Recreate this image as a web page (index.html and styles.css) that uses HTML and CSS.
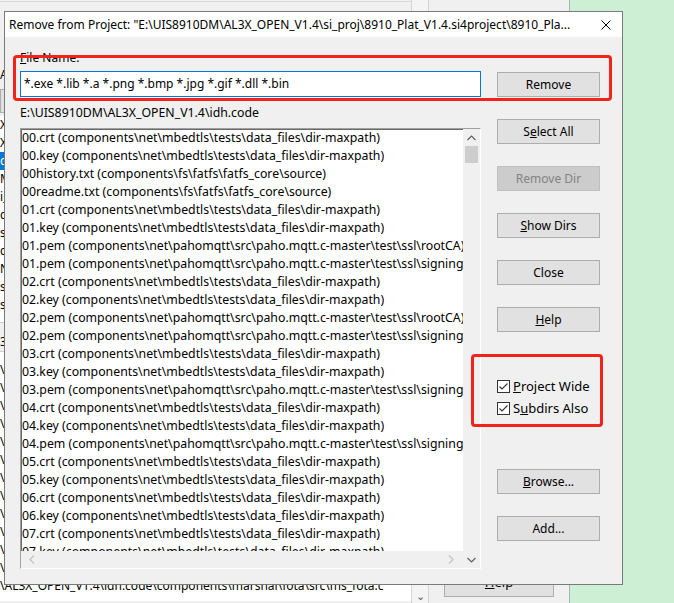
FILE: index.html
```html
<!DOCTYPE html>
<html lang="en">
<head>
    <meta charset="UTF-8">
    <title>Remove from Project</title>
    <link rel="stylesheet" href="styles.css">
</head>
<body>
    <div class="desktop">
        <!-- window behind the dialog -->
        <div class="back-window">
            <div class="back-main">
                <div class="back-toolbar">
                    <div class="back-tab">A</div>
                    <div class="back-field"></div>
                </div>
                <div class="back-list">
                    <div class="back-row">X</div>
                    <div class="back-row">X</div>
                    <div class="back-row selected">d</div>
                    <div class="back-row">M</div>
                    <div class="back-row">i_</div>
                    <div class="back-row">c</div>
                    <div class="back-row">s</div>
                    <div class="back-row">c</div>
                    <div class="back-row">N</div>
                    <div class="back-row">s</div>
                    <div class="back-row">s</div>
                    <div class="back-group">3</div>
                    <div class="back-row">\A</div>
                    <div class="back-row">\A</div>
                    <div class="back-row">\A</div>
                    <div class="back-row">\A</div>
                    <div class="back-row">\A</div>
                    <div class="back-row">\A</div>
                    <div class="back-row">\A</div>
                    <div class="back-row">\A</div>
                    <div class="back-row">\A</div>
                    <div class="back-row">\A</div>
                    <div class="back-row">\A</div>
                    <div class="back-row">\A</div>
                    <div class="back-row">\AL3X_OPEN_V1.4\idh.code\components\marshal\fota\src\ms_fota.c</div>
                </div>
                <div class="back-hscroll">
                    <div class="back-thumb"></div>
                    <span class="back-arrow">&rsaquo;</span>
                </div>
            </div>
            <div class="back-vscroll"><span class="back-arrow">&#8964;</span></div>
            <div class="back-side">
                <button class="back-btn"><u>H</u>elp</button>
            </div>
        </div>
        <div class="green-pane"></div>

        <!-- dialog -->
        <div class="dialog">
            <div class="title-bar">
                <span class="title-text">Remove from Project: "E:\UIS8910DM\AL3X_OPEN_V1.4\si_proj\8910_Plat_V1.4.si4project\8910_Pla...</span>
                <svg class="close-icon" width="10" height="10" viewBox="0 0 10 10">
                    <path d="M0.5 0.5 L9.5 9.5 M9.5 0.5 L0.5 9.5" stroke="#000" stroke-width="1" fill="none"/>
                </svg>
            </div>

            <div class="dialog-body">
                <div class="file-label"><u>F</u>ile Name:</div>
                <div class="file-row">
                    <div class="file-input">*.exe *.lib *.a *.png *.bmp *.jpg *.gif *.dll *.bin</div>
                    <button class="btn">Remove</button>
                </div>

                <div class="main-row">
                    <div class="left-col">
                        <div class="path-label">E:\UIS8910DM\AL3X_OPEN_V1.4\idh.code</div>
                        <div class="file-list">
                            <div class="list-rows">
                                <div class="list-row">00.crt (components\net\mbedtls\tests\data_files\dir-maxpath)</div>
                                <div class="list-row">00.key (components\net\mbedtls\tests\data_files\dir-maxpath)</div>
                                <div class="list-row">00history.txt (components\fs\fatfs\fatfs_core\source)</div>
                                <div class="list-row">00readme.txt (components\fs\fatfs\fatfs_core\source)</div>
                                <div class="list-row">01.crt (components\net\mbedtls\tests\data_files\dir-maxpath)</div>
                                <div class="list-row">01.key (components\net\mbedtls\tests\data_files\dir-maxpath)</div>
                                <div class="list-row">01.pem (components\net\pahomqtt\src\paho.mqtt.c-master\test\ssl\rootCA)</div>
                                <div class="list-row">01.pem (components\net\pahomqtt\src\paho.mqtt.c-master\test\ssl\signing-ca)</div>
                                <div class="list-row">02.crt (components\net\mbedtls\tests\data_files\dir-maxpath)</div>
                                <div class="list-row">02.key (components\net\mbedtls\tests\data_files\dir-maxpath)</div>
                                <div class="list-row">02.pem (components\net\pahomqtt\src\paho.mqtt.c-master\test\ssl\rootCA)</div>
                                <div class="list-row">02.pem (components\net\pahomqtt\src\paho.mqtt.c-master\test\ssl\signing-ca)</div>
                                <div class="list-row">03.crt (components\net\mbedtls\tests\data_files\dir-maxpath)</div>
                                <div class="list-row">03.key (components\net\mbedtls\tests\data_files\dir-maxpath)</div>
                                <div class="list-row">03.pem (components\net\pahomqtt\src\paho.mqtt.c-master\test\ssl\signing-ca)</div>
                                <div class="list-row">04.crt (components\net\mbedtls\tests\data_files\dir-maxpath)</div>
                                <div class="list-row">04.key (components\net\mbedtls\tests\data_files\dir-maxpath)</div>
                                <div class="list-row">04.pem (components\net\pahomqtt\src\paho.mqtt.c-master\test\ssl\signing-ca)</div>
                                <div class="list-row">05.crt (components\net\mbedtls\tests\data_files\dir-maxpath)</div>
                                <div class="list-row">05.key (components\net\mbedtls\tests\data_files\dir-maxpath)</div>
                                <div class="list-row">06.crt (components\net\mbedtls\tests\data_files\dir-maxpath)</div>
                                <div class="list-row">06.key (components\net\mbedtls\tests\data_files\dir-maxpath)</div>
                                <div class="list-row">07.crt (components\net\mbedtls\tests\data_files\dir-maxpath)</div>
                                <div class="list-row">07.key (components\net\mbedtls\tests\data_files\dir-maxpath)</div>
                            </div>
                            <div class="vscroll">
                                <div class="scroll-btn">
                                    <svg width="9" height="6" viewBox="0 0 9 6"><path d="M0.5 5 L4.5 1 L8.5 5" stroke="#606060" stroke-width="1.2" fill="none"/></svg>
                                </div>
                                <div class="vscroll-thumb"></div>
                                <div class="vscroll-track"></div>
                                <div class="scroll-btn">
                                    <svg width="9" height="6" viewBox="0 0 9 6"><path d="M0.5 1 L4.5 5 L8.5 1" stroke="#606060" stroke-width="1.2" fill="none"/></svg>
                                </div>
                            </div>
                            <div class="hscroll">
                                <div class="scroll-btn">
                                    <svg width="6" height="9" viewBox="0 0 6 9"><path d="M5 0.5 L1 4.5 L5 8.5" stroke="#c2c2c2" stroke-width="1.2" fill="none"/></svg>
                                </div>
                                <div class="scroll-btn">
                                    <svg width="6" height="9" viewBox="0 0 6 9"><path d="M1 0.5 L5 4.5 L1 8.5" stroke="#c2c2c2" stroke-width="1.2" fill="none"/></svg>
                                </div>
                            </div>
                        </div>
                    </div>

                    <div class="right-col">
                        <button class="btn">S<u>e</u>lect All</button>
                        <button class="btn" disabled>Remove Dir</button>
                        <button class="btn"><u>S</u>how Dirs</button>
                        <button class="btn">Close</button>
                        <button class="btn"><u>H</u>elp</button>

                        <div class="check-group">
                            <label class="check-row">
                                <svg width="13" height="13" viewBox="0 0 13 13"><rect x="0.5" y="0.5" width="12" height="12" fill="#fff" stroke="#333"/><path d="M2.5 6.5 L5 9 L10.5 3.5" stroke="#333" stroke-width="1.1" fill="none"/></svg>
                                <span><u>P</u>roject Wide</span>
                            </label>
                            <label class="check-row">
                                <svg width="13" height="13" viewBox="0 0 13 13"><rect x="0.5" y="0.5" width="12" height="12" fill="#fff" stroke="#333"/><path d="M2.5 6.5 L5 9 L10.5 3.5" stroke="#333" stroke-width="1.1" fill="none"/></svg>
                                <span>S<u>u</u>bdirs Also</span>
                            </label>
                        </div>

                        <button class="btn btn-browse"><u>B</u>rowse...</button>
                        <button class="btn">Add...</button>
                    </div>
                </div>
            </div>

            <!-- red annotation boxes -->
            <div class="mark mark-file"></div>
            <div class="mark mark-checks"></div>
        </div>
    </div>
</body>
</html>
```

FILE: styles.css
```css
/* Base */
* {
    margin: 0;
    padding: 0;
    box-sizing: border-box;
}

body {
    width: 674px;
    height: 603px;
    overflow: hidden;
    font-family: "Noto Sans", "Noto Sans CJK SC", sans-serif;
    font-size: 12px;
    color: #000;
    background-color: #f0f0f0;
}

button {
    font-family: inherit;
    font-size: 12px;
    color: #000;
}

.desktop {
    position: relative;
    display: flex;
    width: 674px;
    height: 620px;
}

/* Window behind */
.back-window {
    width: 569px;
    display: flex;
    background-color: #f0f0f0;
}

.back-main {
    width: 411px;
    display: flex;
    flex-direction: column;
}

.back-toolbar {
    height: 116px;
    flex-shrink: 0;
    padding-top: 66px;
    border-top: 1px solid transparent;
    box-shadow: inset 0 33px 0 -32px #d9d9d9;
}

.back-tab {
    line-height: 16px;
}

.back-field {
    margin-top: 6px;
    height: 24px;
    border: 1px solid #adadad;
    background-color: #e1e1e1;
}

.back-list {
    flex: 1;
    background-color: #fff;
    overflow: hidden;
}

.back-row {
    height: 18px;
    line-height: 18px;
    white-space: nowrap;
}

.back-row.selected {
    background-color: #0078d7;
    color: #fff;
}

.back-group {
    height: 30px;
    margin-top: 8px;
    margin-bottom: 9px;
    padding-top: 10px;
    line-height: 18px;
    background-color: #f0f0f0;
    border-top: 1px solid #d0d0d0;
    border-bottom: 1px solid #d0d0d0;
}

.back-hscroll {
    height: 17px;
    flex-shrink: 0;
    display: flex;
    align-items: center;
    background-color: #f0f0f0;
    margin-top: 2px;
}

.back-thumb {
    width: 346px;
    height: 100%;
    background-color: #cdcdcd;
}

.back-arrow {
    margin-left: 50px;
    color: #606060;
    font-size: 14px;
}

.back-vscroll {
    width: 18px;
    height: 603px;
    border-left: 1px solid #d4d4d4;
    border-right: 1px solid #d4d4d4;
    background-color: #f4f4f4;
    display: flex;
    align-items: flex-end;
    justify-content: center;
}

.back-vscroll .back-arrow {
    margin: 0;
    font-size: 11px;
}

.back-side {
    flex: 1;
    height: 603px;
    display: flex;
    align-items: flex-end;
    padding: 0 0 6px 15px;
}

.back-btn {
    width: 110px;
    height: 30px;
    background-color: #e1e1e1;
    border: 1px solid #adadad;
    font-size: 13px;
}

.green-pane {
    flex: 1;
    background-color: #cdefd3;
    border-left: 1px solid #a9b5ab;
}

/* Dialog */
.dialog {
    position: absolute;
    left: 4px;
    top: 11px;
    width: 619px;
    height: 574px;
    border: 1px solid #7a7a7a;
    background-color: #f0f0f0;
    display: flex;
    flex-direction: column;
}

.title-bar {
    height: 25px;
    background-color: #fff;
    display: flex;
    align-items: center;
    justify-content: space-between;
    padding: 0 11px 0 4px;
    flex-shrink: 0;
}

.title-text {
    white-space: nowrap;
    line-height: 16px;
}

.dialog-body {
    flex: 1;
    padding: 13px 0 0 15px;
}

.file-label {
    line-height: 16px;
}

.file-row {
    display: flex;
    align-items: flex-start;
    gap: 16px;
    margin-top: 5px;
}

.file-input {
    width: 461px;
    height: 26px;
    border: 1px solid #0078d7;
    background-color: #fff;
    padding: 0 3px;
    line-height: 24px;
    white-space: nowrap;
}

.btn {
    width: 103px;
    height: 25px;
    background-color: #e1e1e1;
    border: 1px solid #adadad;
    flex-shrink: 0;
}

.file-row .btn {
    margin-top: 1px;
}

.btn:disabled {
    background-color: #cccccc;
    border-color: #bfbfbf;
    color: #838383;
}

.main-row {
    display: flex;
    gap: 16px;
    margin-top: 7px;
}

.left-col {
    width: 461px;
}

.path-label {
    height: 20px;
    line-height: 18px;
    margin-bottom: 4px;
    white-space: nowrap;
    font-size: 12.3px;
}

/* File list with sunken edge */
.file-list {
    height: 441px;
    background-color: #fff;
    border: 1px solid;
    border-color: #a0a0a0 #fff #fff #a0a0a0;
    box-shadow: inset 1px 1px 0 #696969, inset -1px -1px 0 #e3e3e3;
    display: grid;
    grid-template-columns: 1fr 17px;
    grid-template-rows: 1fr 17px;
}

.list-rows {
    overflow: hidden;
    padding-left: 1px;
}

.list-row {
    height: 18px;
    line-height: 18px;
    white-space: nowrap;
    font-size: 12.3px;
}

.vscroll {
    grid-row: 1 / 3;
    grid-column: 2;
    background-color: #f0f0f0;
    display: flex;
    flex-direction: column;
}

.scroll-btn {
    width: 17px;
    height: 17px;
    display: flex;
    align-items: center;
    justify-content: center;
    flex-shrink: 0;
}

.vscroll-thumb {
    height: 17px;
    margin: 0 2px;
    background-color: #cdcdcd;
}

.vscroll-track {
    flex: 1;
}

.hscroll {
    grid-row: 2;
    grid-column: 1;
    background-color: #f0f0f0;
    display: flex;
    justify-content: space-between;
    padding: 0 4px 0 2px;
}

.right-col {
    display: flex;
    flex-direction: column;
    padding-top: 15px;
    gap: 22px;
}

.check-group {
    margin-top: 21px;
    margin-bottom: 28px;
}

.check-row {
    display: flex;
    align-items: center;
    gap: 3px;
    height: 22px;
    white-space: nowrap;
    font-size: 13px;
}

.check-row svg {
    flex-shrink: 0;
}

/* Annotation marks */
.mark {
    position: absolute;
    border: 3px solid #f2231a;
    border-radius: 4px;
}

.mark-file {
    left: 8px;
    top: 43px;
    width: 599px;
    height: 46px;
}

.mark-checks {
    left: 466px;
    top: 342px;
    width: 132px;
    height: 73px;
}
```
